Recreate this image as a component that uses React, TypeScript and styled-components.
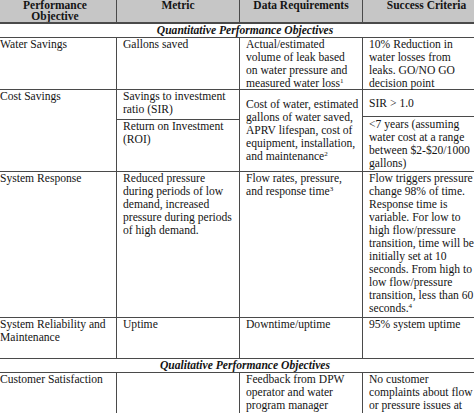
import React from "react";
import styled, { createGlobalStyle } from "styled-components";

const GlobalStyle = createGlobalStyle`
  html, body {
    margin: 0;
    padding: 0;
    background: #ffffff;
    overflow: hidden;
  }
  body {
    width: 474px;
    height: 413px;
  }
`;

const LINE = "#4a4a4a";

const Table = styled.div`
  display: grid;
  grid-template-columns: 122px 122px 122px 127px;
  grid-template-rows: 23px 13px 51px 81px 145px 40px 13px 70px;
  gap: 1px;
  background: ${LINE};
  margin-left: -6px;
  width: 496px;
  font-family: "Liberation Serif", "Times New Roman", serif;
  font-size: 11.6px;
  line-height: 13px;
  color: #141414;
`;

const HeadCell = styled.div`
  background: #c6c6c6;
  border-bottom: 1px solid ${LINE};
  font-weight: bold;
  font-size: 11.5px;
  line-height: 11px;
  text-align: center;
  padding-top: 0;
  white-space: nowrap;
  overflow: hidden;
`;

const SectionCell = styled.div`
  grid-column: 1 / -1;
  background: #ffffff;
  font-weight: bold;
  font-style: italic;
  text-align: center;
  padding-left: 6px;
  line-height: 13px;
  white-space: nowrap;
`;

const Cell = styled.div<{ $middle?: boolean }>`
  background: #ffffff;
  padding: 0 6px;
  white-space: nowrap;
  display: flex;
  flex-direction: column;
  justify-content: ${(p) => (p.$middle ? "center" : "flex-start")};
`;

const Stack = styled.div<{ $top: number }>`
  display: grid;
  grid-template-rows: ${(p) => p.$top}px 1fr;
  gap: 1px;
  background: ${LINE};
`;

const Sup = styled.sup`
  font-size: 7px;
  line-height: 0;
  vertical-align: 4px;
`;

export default function App() {
  return (
    <>
      <GlobalStyle />
      <Table>
        <HeadCell>
          Performance
          <br />
          Objective
        </HeadCell>
        <HeadCell>Metric</HeadCell>
        <HeadCell>Data Requirements</HeadCell>
        <HeadCell>Success Criteria</HeadCell>

        <SectionCell>Quantitative Performance Objectives</SectionCell>

        <Cell>
          <div>Water Savings</div>
        </Cell>
        <Cell>
          <div>Gallons saved</div>
        </Cell>
        <Cell>
          <div>
            Actual/estimated
            <br />
            volume of leak based
            <br />
            on water pressure and
            <br />
            measured water loss<Sup>1</Sup>
          </div>
        </Cell>
        <Cell>
          <div>
            10% Reduction in
            <br />
            water losses from
            <br />
            leaks. GO/NO GO
            <br />
            decision point
          </div>
        </Cell>

        <Cell>
          <div>Cost Savings</div>
        </Cell>
        <Stack $top={29}>
          <Cell>
            <div>
              Savings to investment
              <br />
              ratio (SIR)
            </div>
          </Cell>
          <Cell>
            <div>
              Return on Investment
              <br />
              (ROI)
            </div>
          </Cell>
        </Stack>
        <Cell $middle>
          <div>
            Cost of water, estimated
            <br />
            gallons of water saved,
            <br />
            APRV lifespan, cost of
            <br />
            equipment, installation,
            <br />
            and maintenance<Sup>2</Sup>
          </div>
        </Cell>
        <Stack $top={26}>
          <Cell $middle>
            <div>SIR &gt; 1.0</div>
          </Cell>
          <Cell $middle>
            <div>
              &lt;7 years (assuming
              <br />
              water cost at a range
              <br />
              between $2-$20/1000
              <br />
              gallons)
            </div>
          </Cell>
        </Stack>

        <Cell>
          <div>System Response</div>
        </Cell>
        <Cell>
          <div>
            Reduced pressure
            <br />
            during periods of low
            <br />
            demand, increased
            <br />
            pressure during periods
            <br />
            of high demand.
          </div>
        </Cell>
        <Cell>
          <div>
            Flow rates, pressure,
            <br />
            and response time<Sup>3</Sup>
          </div>
        </Cell>
        <Cell>
          <div>
            Flow triggers pressure
            <br />
            change 98% of time.
            <br />
            Response time is
            <br />
            variable. For low to
            <br />
            high flow/pressure
            <br />
            transition, time will be
            <br />
            initially set at 10
            <br />
            seconds. From high to
            <br />
            low flow/pressure
            <br />
            transition, less than 60
            <br />
            seconds.<Sup>4</Sup>
          </div>
        </Cell>

        <Cell>
          <div>
            System Reliability and
            <br />
            Maintenance
          </div>
        </Cell>
        <Cell>
          <div>Uptime</div>
        </Cell>
        <Cell>
          <div>Downtime/uptime</div>
        </Cell>
        <Cell>
          <div>95% system uptime</div>
        </Cell>

        <SectionCell>Qualitative Performance Objectives</SectionCell>

        <Cell>
          <div>Customer Satisfaction</div>
        </Cell>
        <Cell />
        <Cell>
          <div>
            Feedback from DPW
            <br />
            operator and water
            <br />
            program manager
          </div>
        </Cell>
        <Cell>
          <div>
            No customer
            <br />
            complaints about flow
            <br />
            or pressure issues at
            <br />
            end of test period
          </div>
        </Cell>
      </Table>
    </>
  );
}
